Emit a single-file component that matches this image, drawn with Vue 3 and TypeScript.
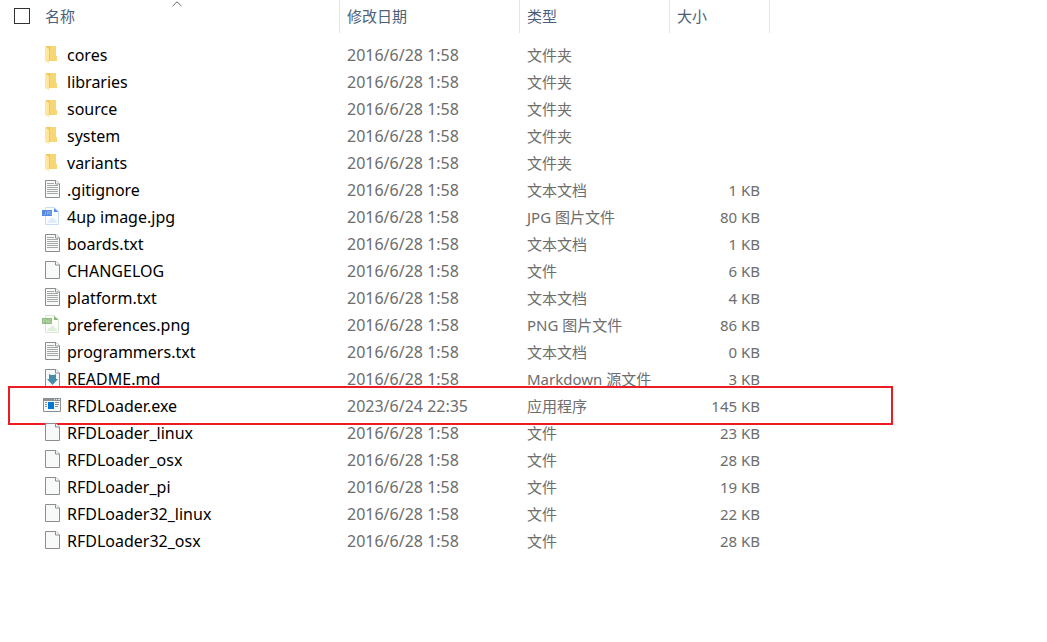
<script setup lang="ts">
type Kind = 'folder' | 'text' | 'jpg' | 'png' | 'file' | 'md' | 'exe'

interface Entry {
  name: string
  kind: Kind
  type: string
  size: string
  date: string
  marked: boolean
}

const typeNames: Record<Kind, string> = {
  folder: '文件夹',
  text: '文本文档',
  jpg: 'JPG 图片文件',
  png: 'PNG 图片文件',
  file: '文件',
  md: 'Markdown 源文件',
  exe: '应用程序',
}

function entry(name: string, kind: Kind, kb?: number, date = '2016/6/28 1:58'): Entry {
  return {
    name,
    kind,
    type: typeNames[kind],
    size: kb === undefined ? '' : `${kb} KB`,
    date,
    marked: name === 'RFDLoader.exe',
  }
}

const entries: Entry[] = [
  entry('cores', 'folder'),
  entry('libraries', 'folder'),
  entry('source', 'folder'),
  entry('system', 'folder'),
  entry('variants', 'folder'),
  entry('.gitignore', 'text', 1),
  entry('4up image.jpg', 'jpg', 80),
  entry('boards.txt', 'text', 1),
  entry('CHANGELOG', 'file', 6),
  entry('platform.txt', 'text', 4),
  entry('preferences.png', 'png', 86),
  entry('programmers.txt', 'text', 0),
  entry('README.md', 'md', 3),
  entry('RFDLoader.exe', 'exe', 145, '2023/6/24 22:35'),
  entry('RFDLoader_linux', 'file', 23),
  entry('RFDLoader_osx', 'file', 28),
  entry('RFDLoader_pi', 'file', 19),
  entry('RFDLoader32_linux', 'file', 22),
  entry('RFDLoader32_osx', 'file', 28),
]
</script>

<template>
  <main class="explorer">
    <table class="files">
      <colgroup>
        <col class="col-name" />
        <col class="col-date" />
        <col class="col-type" />
        <col class="col-size" />
        <col />
      </colgroup>
      <thead>
        <tr>
          <th aria-sort="ascending">
            <div class="head-name">
              <input type="checkbox" class="check" aria-label="名称" />
              <button type="button" class="head-button">名称</button>
            </div>
            <svg class="sort" width="10" height="6" viewBox="0 0 10 6" aria-hidden="true">
              <path d="M.5 5.2 5 .8l4.500 4.400" fill="none" stroke="#6a6a6a" />
            </svg>
          </th>
          <th><button type="button" class="head-button">修改日期</button></th>
          <th><button type="button" class="head-button">类型</button></th>
          <th><button type="button" class="head-button">大小</button></th>
          <td></td>
        </tr>
      </thead>
      <tbody>
        <tr v-for="item in entries" :key="item.name" :class="{ marked: item.marked }">
          <td>
            <div class="name">
              <svg class="icon" width="20" height="18" viewBox="0 0 20 18" aria-hidden="true">
                <g v-if="item.kind === 'folder'">
                  <path d="M4 1h10v10h1v5H4z" fill="#efc75c" />
                  <path d="M8 1h6v10h1v5H8z" fill="#f7d675" />
                  <path d="M3 1l4 3v14l-4-2z" fill="#ffe69c" />
                </g>
                <g v-else-if="item.kind === 'text' || item.kind === 'file' || item.kind === 'md'">
                  <path d="M3.500.5h10.500l3.500 3.500v13.500h-14z" fill="#f8f9f9" stroke="#8b8d8e" />
                  <path d="M13.500.5v3.500h4" fill="#fff" stroke="#8b8d8e" />
                  <path
                    v-if="item.kind === 'text'"
                    d="M5 3.500h7M5 5.500h11M5 7.500h11M5 9.500h11M5 11.500h11M5 13.500h11"
                    fill="none"
                    stroke="#a5a7a7"
                  />
                  <path
                    v-if="item.kind === 'md'"
                    d="M7 5l2 1h3l2-1v5h2l-5.500 6L5 10h2z"
                    fill="#468caf"
                  />
                </g>
                <g v-else-if="item.kind === 'jpg'">
                  <path d="M3.500.5H12l4.500 4v13h-13z" fill="#fbfdff" stroke="#c9dcf8" />
                  <path d="M12 1v4h4.500z" fill="#568ae0" />
                  <path d="M5 16c1-3 2-3 3-3 1-3 4-3 5 0 1 0 2 1 2 3z" fill="#e0ebfb" />
                  <path d="M0 3h10v6H0z" fill="#568ae0" />
                  <path d="M2 7.500h1.500v-3M5.500 8V4.500h1.500v2H5.500M9.500 4.500H8v3h1.500v-1" fill="none" stroke="#86abeb" />
                </g>
                <g v-else-if="item.kind === 'png'">
                  <path d="M3.500.5H12l4.500 4v13h-13z" fill="#fdfefc" stroke="#d8e8d1" />
                  <path d="M12 1v4h4.500z" fill="#86b873" />
                  <path d="M5 16c1-3 2-3 3-3 1-3 4-3 5 0 1 0 2 1 2 3z" fill="#dfefda" />
                  <path d="M0 3h10v6H0z" fill="#91bd80" />
                  <path d="M1.500 8V4.500H3v2H1.500M4.500 8V4.500L6.500 8V4.500M9.500 4.500H8v3h1.500v-1" fill="none" stroke="#b0d2a3" />
                </g>
                <g v-else>
                  <path d="M1.500 2.500h17v13h-17z" fill="#f8f9f9" stroke="#8c9195" />
                  <path d="M1 2h18v3H1z" fill="#8c9195" />
                  <path d="M12 3h1v1h-1zM14 3h1v1h-1zM16 3h2v1h-2z" fill="#e5e8ea" />
                  <path d="M3 6.500h2M3 8.500h2M3 10.500h2M13 6.500h4M13 8.500h4M13 10.500h3" fill="none" stroke="#8c9195" />
                  <path d="M6 6h6v7H6z" fill="#0078d7" />
                </g>
              </svg>
              <span>{{ item.name }}</span>
            </div>
            <div v-if="item.marked" class="outline"></div>
          </td>
          <td class="date">{{ item.date }}</td>
          <td>{{ item.type }}</td>
          <td class="size">{{ item.size }}</td>
          <td></td>
        </tr>
      </tbody>
    </table>
  </main>
</template>

<style>
body {
  margin: 0;
  background: #fff;
}
</style>

<style scoped>
.explorer {
  min-height: 100vh;
  background: #fff;
  font-family: "Noto Sans", "Noto Sans CJK SC", sans-serif;
  font-size: 15px;
  line-height: 26px;
  color: #6d6d6d;
}

.files {
  width: 100%;
  table-layout: fixed;
  border-collapse: separate;
  border-spacing: 0;
}

.col-name {
  width: 340px;
}

.col-date {
  width: 180px;
}

.col-type {
  width: 150px;
}

.col-size {
  width: 100px;
}

th {
  position: relative;
  box-sizing: border-box;
  height: 33px;
  padding: 0 0 2px;
  border-right: 1px solid #e5e5e5;
  font-weight: 400;
  text-align: left;
  vertical-align: middle;
}

.head-button {
  display: block;
  width: 100%;
  padding: 0 7px;
  border: 0;
  background: none;
  font: inherit;
  color: #4c607a;
  text-align: left;
}

.head-name {
  display: flex;
  align-items: center;
  gap: 8px;
  padding-left: 14px;
}

.check {
  appearance: none;
  box-sizing: border-box;
  flex: none;
  width: 16px;
  height: 16px;
  margin: 0;
  border: 1px solid #333;
  background: #fff;
}

.sort {
  position: absolute;
  top: 1px;
  left: 172px;
}

tbody::before {
  content: "";
  display: block;
  height: 9px;
}

tbody tr {
  position: relative;
}

tbody td {
  height: 27px;
  padding: 0 7px;
  vertical-align: top;
  white-space: nowrap;
}

tbody td:first-child {
  padding: 0 0 0 42px;
}

.name {
  display: flex;
  align-items: center;
  gap: 5px;
  font-size: 16px;
  color: #000;
}

tbody td.date {
  font-size: 16px;
}

.icon {
  flex: none;
  margin-bottom: 2px;
}

tbody td.size {
  padding-right: 10px;
  text-align: right;
}

.outline {
  position: absolute;
  top: -7px;
  right: 154px;
  bottom: -5px;
  left: 8px;
  border: 2px solid #ed1c24;
  pointer-events: none;
}
</style>
